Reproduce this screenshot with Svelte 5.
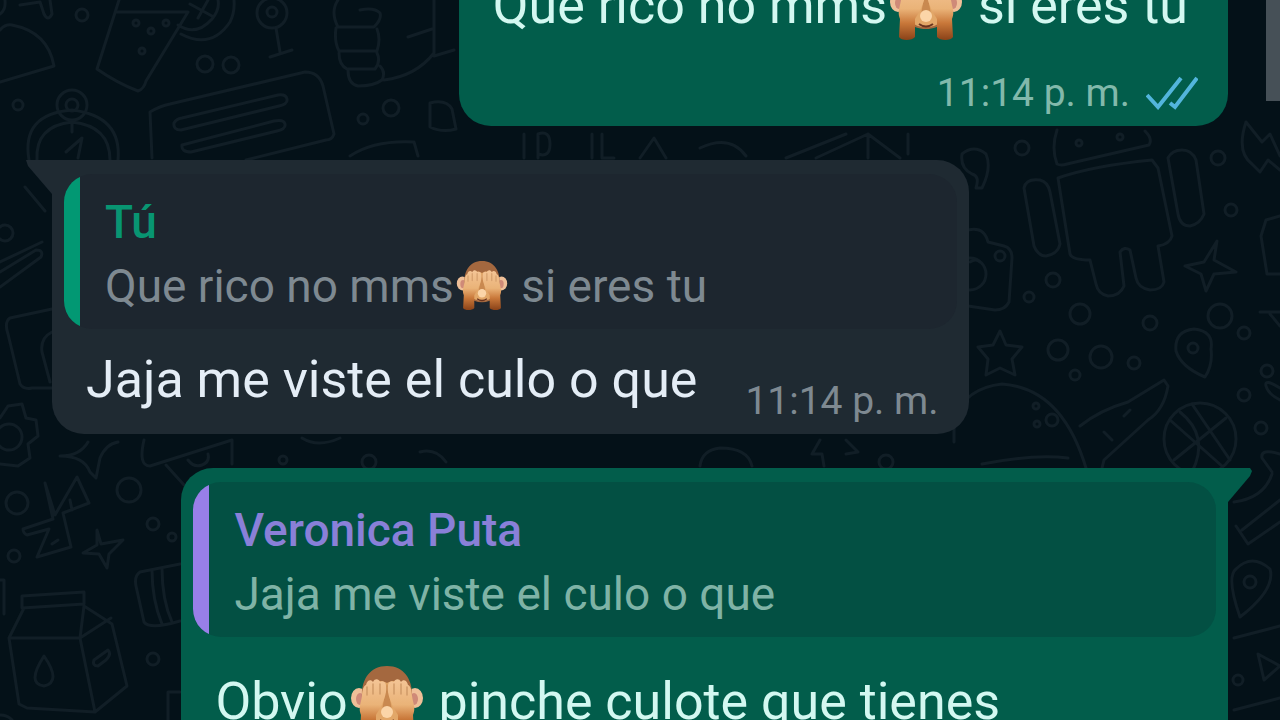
<script lang="ts">
	interface Message {
		side: 'in' | 'out';
		parts: string[];
		tail?: boolean;
		wide?: boolean;
		time?: string;
		read?: boolean;
		quote?: { author: string; parts: string[] };
	}

	// An emoji is drawn between consecutive parts of a text.
	const messages: Message[] = [
		{
			side: 'out',
			parts: ['Que rico no mms', ' si eres tu'],
			time: '11:14 p. m.',
			read: true
		},
		{
			side: 'in',
			parts: ['Jaja me viste el culo o que'],
			tail: true,
			time: '11:14 p. m.',
			quote: { author: 'Tú', parts: ['Que rico no mms', ' si eres tu'] }
		},
		{
			side: 'out',
			parts: ['Obvio', ' pinche culote que tienes'],
			tail: true,
			wide: true,
			quote: { author: 'Veronica Puta', parts: ['Jaja me viste el culo o que'] }
		}
	];

	// cx, cy, r
	const rings = [
		[82, 15, 6], [205, 64, 8], [231, 65, 8], [18, 105, 5], [72, 105, 15], [72, 105, 6],
		[272, 13, 15], [272, 12, 5], [391, 108, 8], [363, 119, 5], [5, 233, 8],
		[1022, 148, 7], [1218, 158, 7], [1231, 210, 6], [1053, 280, 7], [1029, 297, 5],
		[1080, 314, 10], [1150, 323, 7], [1220, 316, 12], [1244, 333, 6], [1058, 350, 10],
		[1101, 357, 11], [1134, 363, 6], [1075, 375, 5], [1193, 348, 5], [1267, 371, 6],
		[1244, 395, 6], [1261, 428, 6], [1052, 420, 6], [1037, 424, 3], [1036, 406, 3],
		[129, 490, 12], [17, 503, 11], [153, 524, 6], [172, 537, 4], [14, 556, 6],
		[153, 659, 6], [1250, 582, 6], [1000, 256, 5], [970, 274, 16], [369, 462, 7],
		[283, 460, 4], [1238, 680, 5], [136, 23, 3], [151, 31, 3], [166, 23, 3], [142, 51, 3],
		[9, 437, 13], [886, 462, 7], [1079, 143, 3], [1120, 137, 3]
	];
</script>

{#snippet monkey()}
	<svg class="emoji" viewBox="0 0 74 70" role="img" aria-label="🙈">
		<defs>
			<linearGradient id="arm" x1="0" y1="0" x2="0" y2="1">
				<stop offset="0" stop-color="#f4c596" />
				<stop offset=".45" stop-color="#eab378" />
				<stop offset=".7" stop-color="#c9783a" />
				<stop offset="1" stop-color="#8a4218" />
			</linearGradient>
		</defs>
		<ellipse cx="9" cy="32" rx="8" ry="10" fill="#efbf98" />
		<ellipse cx="65" cy="32" rx="8" ry="10" fill="#efbf98" />
		<ellipse cx="10" cy="33" rx="4" ry="6" fill="#cf8a78" />
		<ellipse cx="64" cy="33" rx="4" ry="6" fill="#cf8a78" />
		<path d="M37 0C19 0 11 15 12 31c0 18 10 28 25 28s25-10 25-28C63 15 55 0 37 0z" fill="#a4683f" />
		<path d="M37 17c-12-6-22 3-21 16 0 17 8 24 21 24s21-7 21-24c1-13-9-22-21-16z" fill="#e2a768" />
		<path d="M37 17l-5 27h10z" fill="#c98950" />
		<ellipse cx="37" cy="46" rx="6" ry="6" fill="#fbd5a8" />
		<path d="M30 54q7 5 14 0" fill="none" stroke="#69331e" stroke-width="2" />
		<path
			d="M12 30c0-6 2-11 4-11 1-5 5-6 7-3 2-4 6-3 7 0 4-2 6 1 6 4 1 5-1 11-3 16-2 6-5 9-7 13v18c-3 4-14 4-16 0l1-18c-3-7 0-12 1-19z"
			fill="url(#arm)"
		/>
		<path
			d="M62 30c0-6-2-11-4-11-1-5-5-6-7-3-2-4-6-3-7 0-4-2-6 1-6 4-1 5 1 11 3 16 2 6 5 9 7 13v18c3 4 14 4 16 0l-1-18c3-7 0-12-1-19z"
			fill="url(#arm)"
		/>
		<path
			d="M17 21v8M23 18v10M30 18v10M57 21v8M51 18v10M44 18v10"
			fill="none"
			stroke="#d09a68"
			stroke-width="1.5"
			stroke-linecap="round"
		/>
	</svg>
{/snippet}

{#snippet rich(parts: string[])}
	{#each parts as part, i}{#if i > 0}{@render monkey()}{/if}{part}{/each}
{/snippet}

<main class="chat">
	<svg class="wallpaper" viewBox="0 0 1280 720" preserveAspectRatio="xMidYMid slice" aria-hidden="true">
		{#each rings as [cx, cy, r]}
			<circle {cx} {cy} {r} />
		{/each}
		<!-- top left: hat, cup, wheel, fist, card, stopwatch -->
		<path d="M0 30Q5 24 12 25Q48 32 54 66L0 82M20 5l20-3 4 12q4 8 8 0l-2-14M0 14q6-4 5-14" />
		<path d="M119 0L97 69q20 14 41 22q6-2 8-10L188 12H116M178 25q18 12 34-6q8-10 6-19M181 34q30 16 49-12q5-10 4-22M190 4l22 12M198 18l10-18" />
		<path d="M276 28l4 24M270 57l22-7" />
		<path d="M338 0q-8 12 0 27h36q8-8 6-14q-6-6-20-3M336 28q-2 14 3 23h38q4-12 0-22M339 53q0 12 8 16h28q6-8 2-16M348 70q0 14 10 16q16 0 24-6q4-8-2-14M384 80q32-4 50-27V0M408 37l24-8M434 56l20-6" />
		<path d="M152 158l-2-46q10-6 20-8L305 72q14 0 18 14l11 48q-2 6-8 6l-80 20" />
		<path d="M174 123q2-4 8-5l96-23q8-1 9 4t-8 7l-98 24q-8 0-7-7zM182 145l92-24q10-2 11 3t-8 7l-86 21q-10 0-9-7" />
		<path d="M29 160q-8-46 43-50q50 6 46 50M37 160q-2-34 35-38q38 4 38 38M66 152l16-14l-4 20M72 124v8" />
		<path d="M350 156q24-16 64-14l4 14M430 103q16-4 22 6l4 20q-14 4-26-2zM524 158v-24M538 158v-24q12-4 12 10t-12 10M592 158v-24M602 134v24h12M640 158l14-20l12 20M700 148q30-14 46 8M786 158l60-24M816 158l52-24l32 24M868 134v24M908 134v20" />
		<!-- left edge: pencil, phone, gear, sparkles, pinwheel, milk carton -->
		<path d="M0 272l36-22q8 0 5 7L0 287M0 262l42-20M10 318l42-9M10 318q-6 4-2 16l12 50q4 6 12 4h20M52 332q-12 6-10 20l8 30M25 187l20 24" />
		<path d="M0 418l8-12l14-2l4 14l10 2l2 16l-10 8l2 14l-12 8l-18-2M60 456q20 0 28-14M60 456q24 0 30 16l6 6l4-20q6-14 18-16M144 440q-6 26 6 26l82-26v24M166 465l18 20M188 460q6 8 14 5t6-11M302 438q16 10 38 0M420 452q16-4 26 10" />
		<path d="M45 483l8 36l-30 10q0 4 4 6l22-6l-12 28l34-10l-8-34l26-10l-12-26l-22 38zM70 500l2 10M58 540l-6 4M97 530l4 14l22-4l-14 14l-2 14l-8-14l-16-1l14-8zM180 564l-40 8q-6 4-4 14l8 36q6 8 36-1M152 570q0 30 10 54M162 568q0 32 10 54" />
		<path d="M22 596l62-4v12l-62 4zM24 608l-15 30l10 66l8 4l68 4l32-26l-15-62l-28-18M9 638h71l31-20M80 638l15 74M84 606l-4 32M44 656q-18 28 0 30q18-4 0-30zM94 660l14-10q4 4-2 10l-8 6q-6 0-4-6zM180 692h-12v28M0 580h4v34M0 715q8 0 12 5" />
		<!-- right side: robot, camera, star, jellyfish, rocket, ball, pins -->
		<path d="M1057 130q-6 18 0 34q4 2 10 0l82-19q4-6-4-14M1058 178q34-12 94-18l6 8l14 68q-2 8-14 10l6 36q-2 8-14 8q-12-2-14-12l-6-28q-6-4-10 2l4 34q-4 10-16 10q-10-2-12-12l-6-24q-18 0-20-6zM1024 188q2-10 16-8q8 2 10 12l10 52q-2 10-14 12q-8 0-12-10zM1168 158q4-8 14-8t14 10l8 54q-4 10-14 12q-10 0-12-12z" />
		<path d="M968 230q16-4 20 12l16 4q8 2 8 12l-3 44q-4 8-14 8l-27-4M970 262q6-4 10 0M962 154q12-10 24 0q6 14-4 34l-6 0q4-12-4-14q-12-6-10-20zM1246 122l16 20l8-8l10 22M1246 122q-10 30 6 42l8 8l8-12l12 10" />
		<path d="M1000 331l6 14l16 2l-10 12l3 16l-15-7l-14 7l2-16l-10-12l15-2zM1217 241l-3 19l22 12l-22 2l-8 17l-5-17l-16-8l19-4zM1280 216l-14 4l-5 16l6 38h13M1260 312h20M1270 314l10 12" />
		<path d="M954 442v-24q12-30 48-34q60 4 84 84M982 464q50-10 86-6M1080 426q20-16 48-24l36-22l4 6q-4 24-20 34l-44 40l-2 8M1124 416l6-6M1112 440l-8-8M1205 377q-24-10-29-26q-2-20 18-22q20 2 17 20q2 16-6 28z" />
		<circle cx="1200" cy="439" r="36" />
		<path d="M1170 420l52 46M1174 460l52-42M1192 404l38 56M1180 412q30 24 12 60" />
		<path d="M1280 388q-16-10-14-2t14 14M1280 454q-20-6-18 4l10 14M1272 474q-8 24-38 28M1236 526l12 18l32-22M1242 530l38-30M1240 617q-14-40-4-48q16-16 34 0q6 20-30 48zM1234 638l46-12M1258 654l22 12l-16 14zM1234 710l46-12" />
		<path d="M700 466q2-16 20-18q28 0 32 18M820 440l-8 14h10l2 12M846 440l12 12l-12 2" />
	</svg>

	<div class="thread">
		{#each messages as message}
			<article class="bubble {message.side}" class:tailed={message.tail} class:wide={message.wide}>
				{#if message.quote}
					<blockquote class="quote">
						<cite>{message.quote.author}</cite>
						<p>{@render rich(message.quote.parts)}</p>
					</blockquote>
				{/if}
				<div class="body" class:stacked={message.read}>
					<p class="text">{@render rich(message.parts)}</p>
					{#if message.time}
						<div class="meta">
							<time datetime="23:14">{message.time}</time>
							{#if message.read}
								<svg class="ticks" viewBox="0 0 52 34" role="img" aria-label="Leído">
									<path d="M1 19l11 12L35 2M24 27l5 4L51 2" />
								</svg>
							{/if}
						</div>
					{/if}
				</div>
			</article>
		{/each}
	</div>

	<div class="scroll-thumb"></div>
</main>

<style>
	:global(body) {
		margin: 0;
		background: #041118;
	}

	.chat {
		position: relative;
		height: 100vh;
		overflow: hidden;
		background: #041118;
		font-family: Roboto, 'Liberation Sans', sans-serif;
	}

	.wallpaper {
		position: absolute;
		inset: 0;
		width: 100%;
		height: 100%;
		fill: none;
		stroke: #111e26;
		stroke-width: 3;
		stroke-linecap: round;
		stroke-linejoin: round;
	}

	.thread {
		position: relative;
		display: flex;
		flex-direction: column;
		gap: 34px;
		/* scrolled so that the first message is cut by the top edge */
		margin-top: -54px;
		padding: 0 52px;
	}

	.bubble {
		position: relative;
		box-sizing: border-box;
		max-width: 89%;
		padding: 14px 12px 8px;
		border-radius: 32px;
	}

	.in {
		align-self: flex-start;
		background: #1f2a32;
		color: #e4edf6;
	}

	.out {
		align-self: flex-end;
		background: #025d4b;
		color: #d3f8f1;
	}

	.wide {
		width: 89%;
	}

	.tailed::before {
		content: '';
		position: absolute;
		top: 0;
		width: 26px;
		height: 34px;
		background: inherit;
	}

	.in.tailed {
		border-top-left-radius: 0;
	}

	.in.tailed::before {
		right: 100%;
		clip-path: polygon(0 0, 100% 0, 100% 100%, 2px 6px);
	}

	.out.tailed {
		border-top-right-radius: 0;
	}

	.out.tailed::before {
		left: 100%;
		clip-path: polygon(0 0, 22px 0, 24px 3px, 22px 8px, 0 100%);
	}

	.quote {
		position: relative;
		overflow: hidden;
		margin: 0 0 19px;
		padding: 16px 24px 11px 41px;
		border-radius: 28px;
		background: #1d262f;
		color: #7e8991;
		font-size: 46px;
		line-height: 64px;
	}

	.quote::before {
		content: '';
		position: absolute;
		inset: 0 auto 0 0;
		width: 16px;
		background: #029873;
	}

	.out .quote {
		background: #035043;
		color: #7fb3a6;
	}

	.out .quote::before {
		background: #987fe8;
	}

	cite {
		display: block;
		color: #089572;
		font-style: normal;
		font-weight: 500;
	}

	.out cite {
		color: #8980d8;
	}

	p {
		margin: 0;
	}

	.body {
		display: flex;
		align-items: flex-end;
		gap: 48px;
		padding: 0 18px 0 22px;
	}

	.stacked {
		flex-direction: column;
		gap: 28px;
	}

	.text {
		padding-bottom: 14px;
		font-size: 52px;
		line-height: 64px;
	}

	.stacked .text {
		padding: 0 10px 0 0;
	}

	.emoji {
		width: 74px;
		height: 70px;
		margin: 10px 2px 0;
		vertical-align: -17px;
	}

	.quote .emoji {
		width: 52px;
		height: 49px;
		margin-top: 0;
		vertical-align: -8px;
	}

	.meta {
		display: flex;
		align-items: center;
		gap: 16px;
		color: #7e8991;
		font-size: 39px;
		line-height: 50px;
		white-space: nowrap;
	}

	.out .meta {
		color: #82b9ab;
	}

	.ticks {
		width: 52px;
		height: 34px;
		fill: none;
		stroke: #53b5dc;
		stroke-width: 4;
	}

	.scroll-thumb {
		position: absolute;
		top: 0;
		right: 0;
		width: 14px;
		height: 101px;
		background: #465057;
	}
</style>
